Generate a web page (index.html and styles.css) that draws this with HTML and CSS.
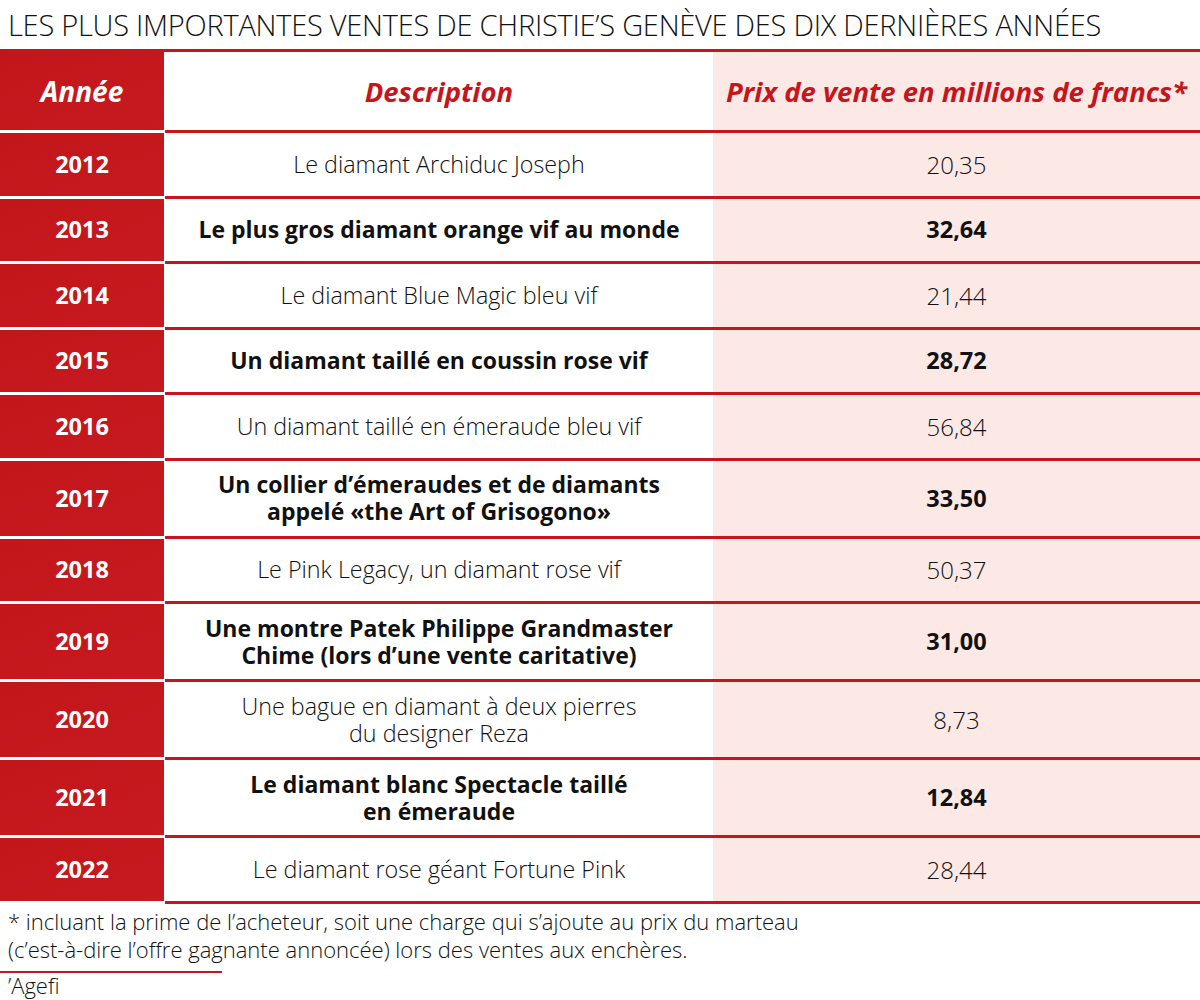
FILE: index.html
```html
<!DOCTYPE html>
<html lang="fr">
<head>
<meta charset="utf-8">
<title>Ventes Christie's Genève</title>
<link rel="stylesheet" href="styles.css">
</head>
<body>
<div class="page">
  <h1 class="title">LES PLUS IMPORTANTES VENTES DE CHRISTIE’S GENÈVE DES DIX DERNIÈRES ANNÉES</h1>
  <div class="table">
    <div class="row head">
      <div class="c year">Année</div>
      <div class="c desc">Description</div>
      <div class="c price">Prix de vente en millions de francs*</div>
    </div>
    <div class="row">
      <div class="c year">2012</div>
      <div class="c desc">Le diamant Archiduc Joseph</div>
      <div class="c price">20,35</div>
    </div>
    <div class="row bold">
      <div class="c year">2013</div>
      <div class="c desc">Le plus gros diamant orange vif au monde</div>
      <div class="c price">32,64</div>
    </div>
    <div class="row">
      <div class="c year">2014</div>
      <div class="c desc">Le diamant Blue Magic bleu vif</div>
      <div class="c price">21,44</div>
    </div>
    <div class="row bold">
      <div class="c year">2015</div>
      <div class="c desc">Un diamant taillé en coussin rose vif</div>
      <div class="c price">28,72</div>
    </div>
    <div class="row">
      <div class="c year">2016</div>
      <div class="c desc">Un diamant taillé en émeraude bleu vif</div>
      <div class="c price">56,84</div>
    </div>
    <div class="row bold tall">
      <div class="c year">2017</div>
      <div class="c desc">Un collier d’émeraudes et de diamants<br>appelé «the Art of Grisogono»</div>
      <div class="c price">33,50</div>
    </div>
    <div class="row">
      <div class="c year">2018</div>
      <div class="c desc">Le Pink Legacy, un diamant rose vif</div>
      <div class="c price">50,37</div>
    </div>
    <div class="row bold tall">
      <div class="c year">2019</div>
      <div class="c desc">Une montre Patek Philippe Grandmaster<br>Chime (lors d’une vente caritative)</div>
      <div class="c price">31,00</div>
    </div>
    <div class="row tall">
      <div class="c year">2020</div>
      <div class="c desc">Une bague en diamant à deux pierres<br>du designer Reza</div>
      <div class="c price">8,73</div>
    </div>
    <div class="row bold tall">
      <div class="c year">2021</div>
      <div class="c desc">Le diamant blanc Spectacle taillé<br>en émeraude</div>
      <div class="c price">12,84</div>
    </div>
    <div class="row">
      <div class="c year">2022</div>
      <div class="c desc">Le diamant rose géant Fortune Pink</div>
      <div class="c price">28,44</div>
    </div>
  </div>
  <p class="note">* incluant la prime de l’acheteur, soit une charge qui s’ajoute au prix du marteau<br>(c’est-à-dire l’offre gagnante annoncée) lors des ventes aux enchères.</p>
  <p class="source">’Agefi</p>
</div>
</body>
</html>
```

FILE: styles.css
```css
* { box-sizing: border-box; }
html, body { margin: 0; padding: 0; background: #fff; }
body {
  font-family: "Open Sans", "Liberation Sans", sans-serif;
  color: #111;
  width: 1200px;
  height: 1000px;
  overflow: hidden;
}
.page { display: flex; flex-direction: column; }
.title {
  margin: 0;
  padding: 7px 0 0 8px;
  height: 49px;
  font-size: 29px;
  font-weight: 300;
  line-height: 36px;
  letter-spacing: -0.25px;
  white-space: nowrap;
  color: #111;
}
.table {
  border-top: 3px solid #c4161c;
  display: flex;
  flex-direction: column;
}
.row {
  display: grid;
  grid-template-columns: 165px 548px 487px;
  height: 65.5px;
}
.row.tall { height: 78px; }
.row.head { height: 81px; }
.c {
  display: flex;
  align-items: center;
  justify-content: center;
  text-align: center;
  font-size: 23.3px;
  font-weight: 300;
  line-height: 27px;
  border-bottom: 3px solid #c4161c;
}
.year {
  background: linear-gradient(160deg, #c2161b 0%, #c71a20 100%);
  color: #fff;
  font-weight: 700;
  font-size: 23.5px;
  border-bottom-color: #fff;
  margin-right: 1px;
}
.desc { background: #fff; }
.price { background: #fce9e6; font-size: 24px; }
.row.bold .desc { font-weight: 700; font-size: 23px; }
.row.bold .price { font-weight: 700; font-size: 23.5px; }
.head .c {
  font-style: italic;
  font-weight: 700;
  font-size: 27.5px;
  color: #c4161c;
}
.head .year { color: #fff; font-size: 28px; }
.note {
  margin: 0;
  padding: 3px 0 8px 8px;
  font-size: 22px;
  font-weight: 300;
  line-height: 28px;
  color: #111;
  width: 222px;
  white-space: nowrap;
  border-bottom: 2px solid #c4161c;
}
.source {
  margin: 0;
  padding: 0 0 0 8px;
  font-size: 22px;
  font-weight: 300;
  line-height: 24px;
}
```
